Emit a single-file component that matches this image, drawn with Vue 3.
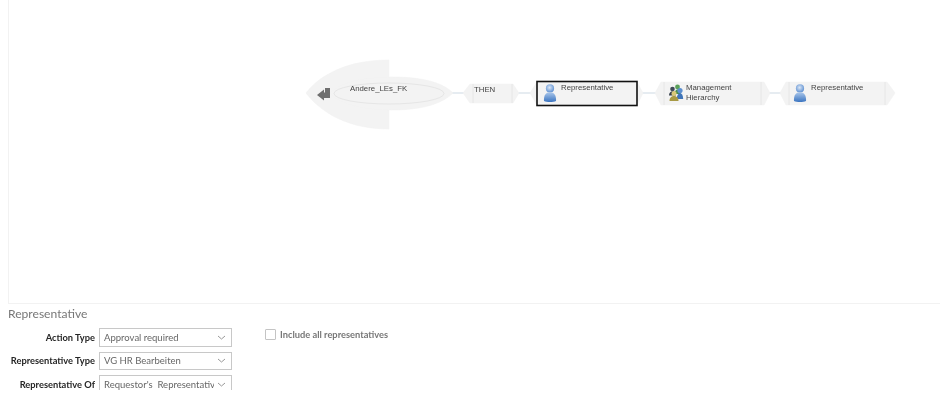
<template>
  <div class="page">
    <div class="canvas">
      <svg class="diagram" width="931" height="303" viewBox="9 0 931 303">
        <!-- connectors -->
        <g class="wire">
          <line x1="450" y1="93" x2="466" y2="93" />
          <line x1="517" y1="93" x2="533" y2="93" />
          <line x1="641" y1="93" x2="658" y2="93" />
          <line x1="768" y1="93" x2="783" y2="93" />
        </g>

        <!-- start shape -->
        <path class="shape" d="M306 93 C316 80 340 60 389 60 L389 129 C340 129 316 106 306 93 Z" />
        <path class="shape" d="M330 93 C340 82 366 77 392 77 C424 77 443 83 453 93 C443 103 424 110 392 110 C366 110 340 105 330 93 Z" />
        <ellipse class="inner" cx="389" cy="93.5" rx="55" ry="10.5" />
        <path class="arrow" d="M325 88 H330 V98 H324 V100.5 L317 95 L324 89.5 V92.5 H325 Z" />

        <!-- THEN -->
        <path class="shape" d="M463 93 L470 84 H513 L519 93 L513 103 H470 Z" />
        <path class="inner-line" d="M473 84 V103 M512 84 V103" />

        <!-- selected representative -->
        <path class="shape" d="M530 93 L537 82 H637 L643 93 L637 105 H537 Z" />
        <rect class="selected" x="537" y="81.5" width="100" height="24" />

        <!-- management hierarchy -->
        <path class="shape" d="M655 93 L661 82 H764 L770 93 L764 105 H661 Z" />
        <path class="inner-line" d="M664 82 V105 M761 82 V105" />

        <!-- last representative -->
        <path class="shape" d="M780 93 L786 82 H887 L895 93 L887 105 H786 Z" />
        <path class="inner-line" d="M789 82 V105 M885 82 V105" />

        <defs>
          <linearGradient id="blue" x1="0" y1="0" x2="0" y2="1">
            <stop offset="0" stop-color="#a9c6ea" />
            <stop offset="1" stop-color="#3a74c0" />
          </linearGradient>
          <radialGradient id="head" cx="0.45" cy="0.4" r="0.6">
            <stop offset="0" stop-color="#dbe7f6" />
            <stop offset="1" stop-color="#5f91d2" />
          </radialGradient>
          <g id="person">
            <circle cx="7" cy="4.4" r="4.1" fill="url(#head)" />
            <path d="M1 17 C0.5 12.5 2.5 9 5 8.4 L9 8.4 C11.5 9 13.5 12.5 13 17 C10 18.4 4 18.4 1 17 Z" fill="url(#blue)" />
          </g>
        </defs>
        <use href="#person" x="543" y="84" />
        <use href="#person" x="793" y="84" />

        <!-- hierarchy icon -->
        <g transform="translate(668 84)">
          <circle cx="9.5" cy="3" r="2.4" fill="#5aa15a" />
          <path d="M6.5 10 C6.5 7 8 5.4 9.5 5.4 C11 5.4 12.5 7 12.5 10 Z" fill="#4a8f52" />
          <circle cx="12" cy="6.5" r="2.6" fill="#5c8fd0" />
          <path d="M8.8 15 C8.8 11 10.5 9 12 9 C13.5 9 15.2 11 15.2 15 Z" fill="#3f74b8" />
          <circle cx="4.5" cy="5" r="2.3" fill="#3f4a58" />
          <path d="M1 11.5 C1 9 2.5 7.2 4.5 7.2 C6.5 7.2 8 9 8 11.5 Z" fill="#333d4a" />
          <circle cx="6" cy="9.6" r="2.5" fill="#d8c878" />
          <path d="M1.5 17 C1.5 13.5 3.5 12 6 12 C8.5 12 10.5 13.5 10.5 17 Z" fill="#a89a45" />
        </g>
      </svg>

      <span class="node-label" style="left: 350px; top: 84px">Andere_LEs_FK</span>
      <span class="node-label" style="left: 474px; top: 85px">THEN</span>
      <span class="node-label" style="left: 561px; top: 83px">Representative</span>
      <span class="node-label" style="left: 686px; top: 83px">Management<br />Hierarchy</span>
      <span class="node-label" style="left: 811px; top: 83px">Representative</span>
    </div>

    <div class="form">
      <div class="title">Representative</div>
      <div class="body">
        <div class="fields">
          <div class="row" v-for="row in rows" :key="row.label">
            <label>{{ row.label }}</label>
            <div class="select">
              <span>{{ row.value }}</span>
              <svg width="9" height="5" viewBox="0 0 9 5"><path d="M1 1 L4.5 4 L8 1" /></svg>
            </div>
          </div>
        </div>
        <div class="check">
          <span class="box"></span>
          <span>Include all representatives</span>
        </div>
      </div>
    </div>
  </div>
</template>

<script setup>
const rows = [
  { label: 'Action Type', value: 'Approval required' },
  { label: 'Representative Type', value: 'VG HR Bearbeiten' },
  { label: 'Representative Of', value: "Requestor's  Representative" }
]
</script>

<style>
html, body {
  background: #fff;
}
</style>

<style scoped>
.page {
  width: 940px;
  height: 406px;
  overflow: hidden;
  background: #fff;
  filter: blur(0.4px);
}
.canvas {
  position: relative;
  height: 303px;
  margin-left: 8px;
  border-left: 1px solid #f2f2f2;
  border-bottom: 1px solid #f2f2f2;
}
.diagram {
  display: block;
}
.wire line {
  stroke: #d6dfe8;
  stroke-width: 1.2;
}
.shape {
  fill: #f3f3f3;
  stroke: #f0f0f0;
  stroke-width: 0.5;
}
.inner {
  fill: #f3f3f3;
  stroke: #e6e6e6;
  stroke-width: 1;
}
.inner-line {
  fill: none;
  stroke: #e6e6e6;
  stroke-width: 1;
}
.selected {
  fill: none;
  stroke: #111;
  stroke-width: 1.6;
}
.arrow {
  fill: #6f6f6f;
}
.node-label {
  position: absolute;
  margin-left: -9px;
  font-family: "Liberation Sans", Arial, sans-serif;
  font-size: 7.8px;
  line-height: 9.5px;
  color: #444;
  white-space: nowrap;
}
.form {
  height: 86px;
  box-sizing: border-box;
  padding-top: 5px;
  overflow: hidden;
  font-family: Lato, "Open Sans", sans-serif;
}
.title {
  height: 11px;
  margin-left: 8px;
  overflow: hidden;
  font-size: 12.1px;
  line-height: 10px;
  color: #777;
}
.body {
  display: flex;
  align-items: flex-start;
  margin-top: 8px;
}
.fields {
  display: flex;
  flex-direction: column;
  gap: 5px;
  width: 232px;
}
.row {
  display: flex;
  align-items: center;
  justify-content: flex-end;
  gap: 4px;
}
.row label {
  font-size: 9.3px;
  font-weight: 700;
  color: #262626;
  white-space: nowrap;
}
.select {
  display: flex;
  flex: none;
  align-items: center;
  justify-content: space-between;
  box-sizing: border-box;
  width: 133px;
  height: 18.5px;
  padding: 0 5px 0 4px;
  border: 1px solid #c8c8c8;
  font-size: 9.5px;
  color: #666;
  white-space: pre;
  overflow: hidden;
}
.select span {
  overflow: hidden;
  max-width: 112px;
}
.select svg {
  flex: none;
  margin-left: 3px;
}
.select path {
  fill: none;
  stroke: #999;
  stroke-width: 1;
}
.check {
  display: flex;
  align-items: center;
  gap: 4px;
  margin-top: 1px;
  margin-left: 33px;
  font-size: 9.3px;
  font-weight: 700;
  color: #777;
}
.box {
  box-sizing: border-box;
  width: 11px;
  height: 11px;
  border: 1px solid #c4c4c4;
  border-radius: 1px;
}
</style>
